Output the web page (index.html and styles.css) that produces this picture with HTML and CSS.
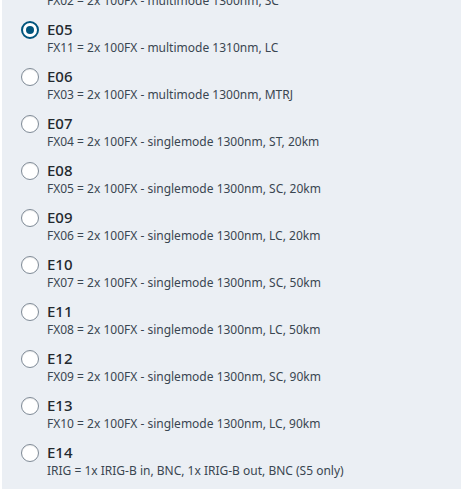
FILE: index.html
```html
<!DOCTYPE html>
<html lang="en">
<head>
<meta charset="utf-8">
<title>Options</title>
<link rel="stylesheet" href="styles.css">
</head>
<body>
<div class="panel">
  <ul class="options">
    <li class="option"><span class="radio"></span><div class="text"><div class="label">E04</div><div class="sub">FX02 = 2x 100FX - multimode 1300nm, SC</div></div></li>
    <li class="option"><span class="radio checked"></span><div class="text"><div class="label">E05</div><div class="sub">FX11 = 2x 100FX - multimode 1310nm, LC</div></div></li>
    <li class="option"><span class="radio"></span><div class="text"><div class="label">E06</div><div class="sub">FX03 = 2x 100FX - multimode 1300nm, MTRJ</div></div></li>
    <li class="option"><span class="radio"></span><div class="text"><div class="label">E07</div><div class="sub">FX04 = 2x 100FX - singlemode 1300nm, ST, 20km</div></div></li>
    <li class="option"><span class="radio"></span><div class="text"><div class="label">E08</div><div class="sub">FX05 = 2x 100FX - singlemode 1300nm, SC, 20km</div></div></li>
    <li class="option"><span class="radio"></span><div class="text"><div class="label">E09</div><div class="sub">FX06 = 2x 100FX - singlemode 1300nm, LC, 20km</div></div></li>
    <li class="option"><span class="radio"></span><div class="text"><div class="label">E10</div><div class="sub">FX07 = 2x 100FX - singlemode 1300nm, SC, 50km</div></div></li>
    <li class="option"><span class="radio"></span><div class="text"><div class="label">E11</div><div class="sub">FX08 = 2x 100FX - singlemode 1300nm, LC, 50km</div></div></li>
    <li class="option"><span class="radio"></span><div class="text"><div class="label">E12</div><div class="sub">FX09 = 2x 100FX - singlemode 1300nm, SC, 90km</div></div></li>
    <li class="option"><span class="radio"></span><div class="text"><div class="label">E13</div><div class="sub">FX10 = 2x 100FX - singlemode 1300nm, LC, 90km</div></div></li>
    <li class="option"><span class="radio"></span><div class="text"><div class="label">E14</div><div class="sub">IRIG = 1x IRIG-B in, BNC, 1x IRIG-B out, BNC (S5 only)</div></div></li>
  </ul>
</div>
</body>
</html>
```

FILE: styles.css
```css
html, body {
  margin: 0;
  padding: 0;
  background: #ffffff;
  height: 492px;
  overflow: hidden;
}
body {
  font-family: "Noto Sans", "Open Sans", sans-serif;
  color: #1f2a33;
}
.panel {
  margin: 0 1px 0 2px;
  height: 489px;
  background: #ebeff4;
  overflow: hidden;
}
.options {
  list-style: none;
  margin: -32px 0 0 0;
  padding: 0;
}
.option {
  display: flex;
  align-items: flex-start;
  gap: 8px;
  height: 47px;
  padding: 4px 0 0 19px;
  box-sizing: border-box;
}
.radio {
  flex: none;
  width: 18px;
  height: 18px;
  margin-top: 2px;
  border-radius: 50%;
  border: 1px solid #7f8a96;
  background: #ffffff;
  box-sizing: border-box;
  position: relative;
  box-shadow: inset 0 1px 1px rgba(0, 0, 0, 0.08);
}
.radio.checked {
  border: 2px solid #00557d;
  box-shadow: none;
}
.radio.checked::after {
  content: "";
  position: absolute;
  left: 3px;
  top: 3px;
  width: 8px;
  height: 8px;
  border-radius: 50%;
  background: #00557d;
}
.label {
  font-size: 15px;
  font-weight: 500;
  line-height: 20px;
  color: #23292f;
}
.sub {
  font-size: 12px;
  line-height: 18px;
  color: #3a4651;
}
```
